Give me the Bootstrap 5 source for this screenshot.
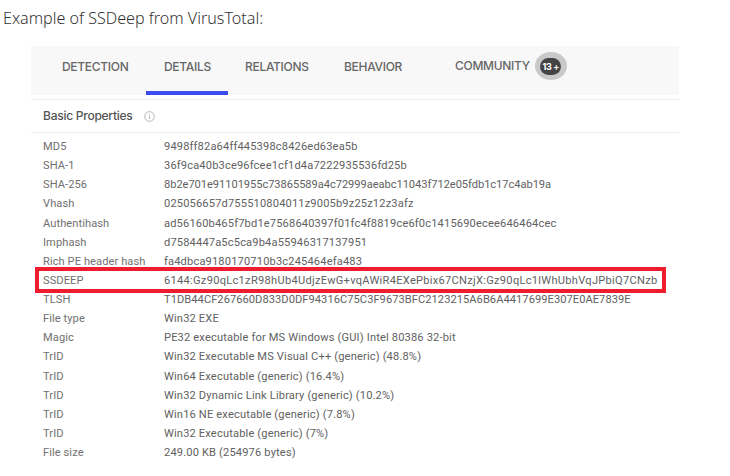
<!doctype html>
<html><head><meta charset="utf-8">
<link href="https://cdn.jsdelivr.net/npm/bootstrap@5.3.0/dist/css/bootstrap.min.css" rel="stylesheet">
<style>
html,body{background:#fff;height:476px;overflow:hidden}
.intro{font:300 16.1px/20px "Noto Sans",sans-serif;color:#333;margin:0;padding:8px 0 0 3px;height:46px}
.vt-panel{margin-left:31px;width:648px}
.tabbar{background:#f8f8f8;height:49px;padding-left:15px;color:#666;font:500 12px/1 Inter,sans-serif;letter-spacing:-.3px}
.tabitem{height:49px;padding:15px 0 0 16px;white-space:nowrap}
.tab-det{width:100px}
.tab-act{width:82px;padding-left:18px;border-bottom:4px solid #3b4df0;padding-top:15px}
.tab-rel{width:99px;padding-left:17px}
.tab-beh{width:111px;padding-left:17px}
.tab-com{padding:14px 0 0 17px}
.bubble{width:32px;height:28px;background:#c9c9c9;border-radius:50%;margin:-8px 0 0 5px}
.bubble span{background:#444;color:#fff;border-radius:10px;font:700 9px/17px Inter,sans-serif;width:21px;height:17px;text-align:center;letter-spacing:-.3px}
.head-row{height:34px;margin-top:4px;border-top:1px solid #eee;border-bottom:1px solid #eee;padding:0 0 0 12px;font:500 12.1px/1 Inter,sans-serif;color:#555;letter-spacing:-.3px}
.info-ico{margin-left:11px}
.rows{padding-top:4px;font:400 11.1px/19px Roboto,sans-serif;color:#707070;letter-spacing:.08px}
.prow{height:19.125px;padding-left:12px;white-space:nowrap}
.pkey{width:121px;flex:none}
.pval{color:#616161;letter-spacing:.16px}
.pval.tight{letter-spacing:-.04px}
.pval.wide{letter-spacing:.28px}
.pval.caps{letter-spacing:.06px}
.boxed{position:absolute;left:35px;top:267px;width:631px;height:26px;border:4px solid #ed1c2e}
</style></head><body>
<p class="intro">Example of SSDeep from VirusTotal:</p>
<div class="vt-panel">
<div class="tabbar d-flex">
<div class="tabitem tab-det">DETECTION</div>
<div class="tabitem tab-act">DETAILS</div>
<div class="tabitem tab-rel">RELATIONS</div>
<div class="tabitem tab-beh">BEHAVIOR</div>
<div class="tabitem tab-com d-flex align-items-start">COMMUNITY<div class="bubble d-flex align-items-center justify-content-center"><span>13 +</span></div></div>
</div>
<div class="head-row d-flex align-items-center">Basic Properties
<svg class="info-ico" width="11" height="11" viewBox="0 0 11 11" fill="none" stroke="#b5b5b5"><circle cx="5.5" cy="5.5" r="4.8"/><path d="M5.5 4.6v3.4M5.5 2.8v1"/></svg></div>
<div class="rows">
<div class="prow d-flex"><div class="pkey">MD5</div><div class="pval">9498ff82a64ff445398c8426ed63ea5b</div></div>
<div class="prow d-flex"><div class="pkey">SHA-1</div><div class="pval">36f9ca40b3ce96fcee1cf1d4a7222935536fd25b</div></div>
<div class="prow d-flex"><div class="pkey">SHA-256</div><div class="pval tight">8b2e701e91101955c73865589a4c72999aeabc11043f712e05fdb1c17c4ab19a</div></div>
<div class="prow d-flex"><div class="pkey">Vhash</div><div class="pval">025056657d755510804011z9005b9z25z12z3afz</div></div>
<div class="prow d-flex"><div class="pkey">Authentihash</div><div class="pval">ad56160b465f7bd1e7568640397f01fc4f8819ce6f0c1415690ecee646464cec</div></div>
<div class="prow d-flex"><div class="pkey">Imphash</div><div class="pval">d7584447a5c5ca9b4a55946317137951</div></div>
<div class="prow d-flex"><div class="pkey">Rich PE header hash</div><div class="pval">fa4dbca9180170710b3c245464efa483</div></div>
<div class="prow d-flex"><div class="pkey">SSDEEP</div><div class="pval wide">6144:Gz90qLc1zR98hUb4UdjzEwG+vqAWiR4EXePbix67CNzjX:Gz90qLc1lWhUbhVqJPbiQ7CNzb</div></div>
<div class="prow d-flex"><div class="pkey">TLSH</div><div class="pval caps">T1DB44CF267660D833D0DF94316C75C3F9673BFC2123215A6B6A4417699E307E0AE7839E</div></div>
<div class="prow d-flex"><div class="pkey">File type</div><div class="pval">Win32 EXE</div></div>
<div class="prow d-flex"><div class="pkey">Magic</div><div class="pval">PE32 executable for MS Windows (GUI) Intel 80386 32-bit</div></div>
<div class="prow d-flex"><div class="pkey">TrID</div><div class="pval">Win32 Executable MS Visual C++ (generic) (48.8%)</div></div>
<div class="prow d-flex"><div class="pkey">TrID</div><div class="pval">Win64 Executable (generic) (16.4%)</div></div>
<div class="prow d-flex"><div class="pkey">TrID</div><div class="pval">Win32 Dynamic Link Library (generic) (10.2%)</div></div>
<div class="prow d-flex"><div class="pkey">TrID</div><div class="pval">Win16 NE executable (generic) (7.8%)</div></div>
<div class="prow d-flex"><div class="pkey">TrID</div><div class="pval">Win32 Executable (generic) (7%)</div></div>
<div class="prow d-flex"><div class="pkey">File size</div><div class="pval">249.00 KB (254976 bytes)</div></div>
</div>
</div>
<div class="boxed"></div>
<script src="https://cdn.jsdelivr.net/npm/bootstrap@5.3.0/dist/js/bootstrap.bundle.min.js"></script>
</body></html>
